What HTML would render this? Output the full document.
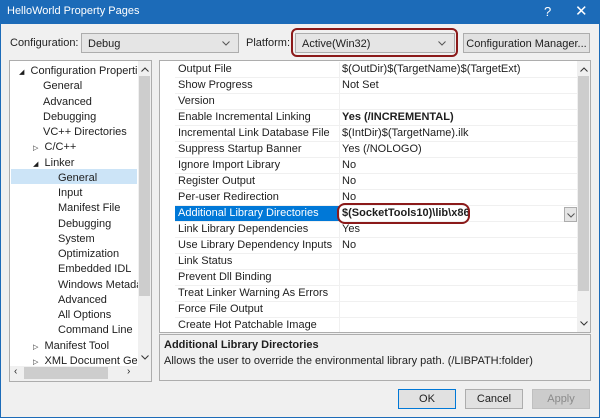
<!DOCTYPE html>
<html><head><style>
*{margin:0;padding:0;box-sizing:border-box}
body{width:600px;height:418px;overflow:hidden;background:#f0f0f0;font-family:"Liberation Sans",sans-serif;font-size:11px;color:#1e1e1e;position:relative}
.a{position:absolute;white-space:nowrap}
.win{position:absolute;left:0;top:0;width:600px;height:418px;border:1px solid #1c6bb8}
.tb{left:0;top:0;width:600px;height:24px;background:#1c6bb8;color:#fff}
.combo{background:#e5e5e5;border:1px solid #adadad;height:20px;padding:3px 6px}
.btn{background:#e1e1e1;border:1px solid #adadad;text-align:center;padding-top:3px;height:20px}
.panel{background:#fff;border:1px solid #adadad}
.tr{height:15.25px;line-height:15px}
.row{position:absolute;left:15px;width:402px;height:16px;border-bottom:1px solid #f0f0f0;line-height:15px}
.row span{position:absolute;left:3px}
.row b,.row i{position:absolute;left:167px;font-style:normal}
.row:before{content:"";position:absolute;left:164px;top:0;height:16px;border-left:1px solid #f0f0f0}
svg.ch{position:absolute}
</style></head><body>
<div class="win"></div>
<div class="a tb"><span class="a" style="left:7px;top:5px">HelloWorld Property Pages</span><span class="a" style="left:544px;top:4px;font-size:13px">?</span><span class="a" style="left:575px;top:2px;font-size:15px">✕</span></div>
<div class="a" style="left:10px;top:37px">Configuration:</div>
<div class="a combo" style="left:81px;top:33px;width:158px;padding-top:4px">Debug<svg class="ch" style="right:8px;top:7px" width="8" height="5"><path d="M0.5 0.5L4 4L7.5 0.5" stroke="#555" fill="none"/></svg></div>
<div class="a" style="left:246px;top:37px">Platform:</div>
<div class="a combo" style="left:295px;top:33px;width:160px;padding-top:4px">Active(Win32)<svg class="ch" style="right:8px;top:7px" width="8" height="5"><path d="M0.5 0.5L4 4L7.5 0.5" stroke="#555" fill="none"/></svg></div>
<div class="a" style="left:291px;top:28px;width:167px;height:29px;border:2px solid #8b1a1a;border-radius:6px"></div>
<div class="a btn" style="left:463px;top:33px;width:127px;padding-top:4px">Configuration Manager...</div>

<div class="a panel" style="left:9px;top:60px;width:143px;height:322px;overflow:hidden">
 <div class="a" style="left:1px;top:108px;width:126px;height:15px;background:#cce4f7"></div>
 <div class="a" style="left:9px;top:3px">
 <div class="tr"><span style="font-size:7px">◢</span>&nbsp; Configuration Properties</div>
 <div class="tr" style="padding-left:24px">General</div>
 <div class="tr" style="padding-left:24px">Advanced</div>
 <div class="tr" style="padding-left:24px">Debugging</div>
 <div class="tr" style="padding-left:24px">VC++ Directories</div>
 <div class="tr" style="padding-left:14px"><span style="font-size:7px">▷</span>&nbsp; C/C++</div>
 <div class="tr" style="padding-left:14px"><span style="font-size:7px">◢</span>&nbsp; Linker</div>
 <div class="tr" style="padding-left:39px">General</div>
 <div class="tr" style="padding-left:39px">Input</div>
 <div class="tr" style="padding-left:39px">Manifest File</div>
 <div class="tr" style="padding-left:39px">Debugging</div>
 <div class="tr" style="padding-left:39px">System</div>
 <div class="tr" style="padding-left:39px">Optimization</div>
 <div class="tr" style="padding-left:39px">Embedded IDL</div>
 <div class="tr" style="padding-left:39px">Windows Metadata</div>
 <div class="tr" style="padding-left:39px">Advanced</div>
 <div class="tr" style="padding-left:39px">All Options</div>
 <div class="tr" style="padding-left:39px">Command Line</div>
 <div class="tr" style="padding-left:14px"><span style="font-size:7px">▷</span>&nbsp; Manifest Tool</div>
 <div class="tr" style="padding-left:14px"><span style="font-size:7px">▷</span>&nbsp; XML Document Generator</div>
 </div>
 <div class="a" style="left:128px;top:0;width:13px;height:305px;background:#f0f0f0"></div>
 <div class="a" style="left:129px;top:15px;width:11px;height:220px;background:#cdcdcd"></div>
 <svg class="ch" style="left:131px;top:6px" width="8" height="5"><path d="M0.5 4.5L4 1L7.5 4.5" stroke="#333" fill="none"/></svg>
 <svg class="ch" style="left:131px;top:294px" width="8" height="5"><path d="M0.5 0.5L4 4L7.5 0.5" stroke="#333" fill="none"/></svg>
 <div class="a" style="left:0;top:305px;width:141px;height:15px;background:#f0f0f0"></div>
 <div class="a" style="left:14px;top:306px;width:84px;height:12px;background:#cdcdcd"></div>
 <div class="a" style="left:4px;top:305px;font-size:10px">‹</div>
 <div class="a" style="left:117px;top:305px;font-size:10px">›</div>
</div>

<div class="a panel" style="left:159px;top:60px;width:432px;height:273px;overflow:hidden">
 <div class="row" style="top:1px"><span>Output File</span><i>$(OutDir)$(TargetName)$(TargetExt)</i></div>
 <div class="row" style="top:17px"><span>Show Progress</span><i>Not Set</i></div>
 <div class="row" style="top:33px"><span>Version</span></div>
 <div class="row" style="top:49px"><span>Enable Incremental Linking</span><b>Yes (/INCREMENTAL)</b></div>
 <div class="row" style="top:65px"><span>Incremental Link Database File</span><i>$(IntDir)$(TargetName).ilk</i></div>
 <div class="row" style="top:81px"><span>Suppress Startup Banner</span><i>Yes (/NOLOGO)</i></div>
 <div class="row" style="top:97px"><span>Ignore Import Library</span><i>No</i></div>
 <div class="row" style="top:113px"><span>Register Output</span><i>No</i></div>
 <div class="row" style="top:129px"><span>Per-user Redirection</span><i>No</i></div>
 <div class="row" style="top:145px"><span style="left:0;width:164px;height:15px;background:#0078d7;color:#fff;padding-left:3px">Additional Library Directories</span><b>$(SocketTools10)\lib\x86</b></div>
 <div class="row" style="top:161px"><span>Link Library Dependencies</span><i>Yes</i></div>
 <div class="row" style="top:177px"><span>Use Library Dependency Inputs</span><i>No</i></div>
 <div class="row" style="top:193px"><span>Link Status</span></div>
 <div class="row" style="top:209px"><span>Prevent Dll Binding</span></div>
 <div class="row" style="top:225px"><span>Treat Linker Warning As Errors</span></div>
 <div class="row" style="top:241px"><span>Force File Output</span></div>
 <div class="row" style="top:257px"><span>Create Hot Patchable Image</span></div>
 <div class="a" style="left:404px;top:146px;width:13px;height:15px;background:#e5e5e5;border:1px solid #adadad"><svg class="ch" style="left:2px;top:5px" width="8" height="5"><path d="M0.5 0.5L4 4L7.5 0.5" stroke="#555" fill="none"/></svg></div>
 <div class="a" style="left:417px;top:0;width:13px;height:271px;background:#f0f0f0"></div>
 <div class="a" style="left:418px;top:15px;width:11px;height:215px;background:#cdcdcd"></div>
 <svg class="ch" style="left:420px;top:6px" width="8" height="5"><path d="M0.5 4.5L4 1L7.5 4.5" stroke="#333" fill="none"/></svg>
 <svg class="ch" style="left:420px;top:260px" width="8" height="5"><path d="M0.5 0.5L4 4L7.5 0.5" stroke="#333" fill="none"/></svg>
</div>
<div class="a" style="left:337px;top:203px;width:133px;height:21px;border:2px solid #8b1a1a;border-radius:8px"></div>

<div class="a" style="left:159px;top:334px;width:432px;height:47px;border:1px solid #adadad;background:#f0f0f0">
 <div class="a" style="left:4px;top:4px;font-weight:bold">Additional Library Directories</div>
 <div class="a" style="left:4px;top:20px">Allows the user to override the environmental library path. (/LIBPATH:folder)</div>
</div>

<div class="a btn" style="left:398px;top:389px;width:58px;border:1px solid #0078d7">OK</div>
<div class="a btn" style="left:465px;top:389px;width:58px">Cancel</div>
<div class="a btn" style="left:532px;top:389px;width:58px;background:#ccc;border-color:#bfbfbf;color:#8a8a8a">Apply</div>
</body></html>
